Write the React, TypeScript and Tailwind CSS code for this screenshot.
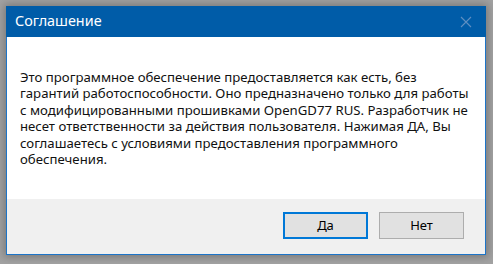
import React from "react";

export default function App() {
  const lines = [
    "Это программное обеспечение предоставляется как есть, без",
    "гарантий работоспособности. Оно предназначено только для работы",
    "с модифицированными прошивками OpenGD77 RUS. Разработчик не",
    "несет ответственности за действия пользователя. Нажимая ДА, Вы",
    "соглашаетесь с условиями предоставления программного",
    "обеспечения.",
  ];
  return (
    <div
      className="w-[493px] h-[264px] bg-[#a2a2a2] pl-[6px] pt-[6px] overflow-hidden"
      style={{ fontFamily: '"Noto Sans", "Open Sans", sans-serif' }}
    >
      <div className="w-[480px] h-[249px] flex flex-col border border-t-0 border-[#1c74c8] bg-white shadow-[0_0_8px_2px_rgba(0,0,0,0.25)]">
        <div className="h-[31px] bg-[#005ca8] flex items-center justify-between pl-[9px] pr-[10px] -mx-px">
          <span className="text-white text-[14.4px] leading-none">Соглашение</span>
          <svg width="12" height="12" viewBox="0 0 12 12" className="mr-[4px]">
            <path d="M1 1 L11 11 M11 1 L1 11" stroke="#5f8fc2" strokeWidth="1.1" />
          </svg>
        </div>
        <div className="h-[162px] bg-white pl-[13px] pt-[32px] text-[13.2px] leading-[16.4px] text-[#111]">
          {lines.map((l, i) => (
            <div key={i} className="whitespace-nowrap">{l}</div>
          ))}
        </div>
        <div className="flex-1 bg-[#f0f0f0] flex justify-end items-start pt-[13px] pr-[21px] gap-[11px]">
          <button className="w-[85px] h-[27px] bg-[#e1e1e1] border-2 border-[#0078d7] text-[13px] text-black">
            Да
          </button>
          <button className="w-[85px] h-[27px] bg-[#e1e1e1] border border-[#adadad] text-[13px] text-black">
            Нет
          </button>
        </div>
      </div>
    </div>
  );
}
